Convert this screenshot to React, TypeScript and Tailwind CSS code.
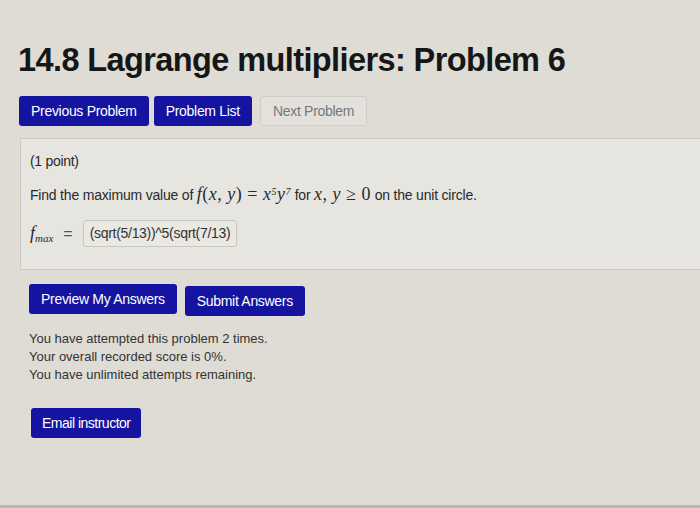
import React from 'react';

const btn =
  'h-[30px] px-3 rounded-[3px] bg-[#1414a0] text-white text-[14px] tracking-[-0.3px] flex items-center';

export default function App() {
  return (
    <div className="w-[700px] h-[508px] overflow-hidden bg-[#dedcd5] font-['Liberation_Sans',Arial,sans-serif] text-[#2a2a2a] flex flex-col">
      <div className="flex-1 pl-[18px]">
        <h1 className="mt-[40px] text-[32.5px] leading-[40px] font-bold text-[#161616] tracking-[-0.6px]">
          14.8 Lagrange multipliers: Problem 6
        </h1>

        <div className="mt-[16px] flex gap-[5px] pl-[1px]">
          <button className={btn}>Previous Problem</button>
          <button className={btn}>Problem List</button>
          <button className="h-[30px] ml-[3px] px-3 rounded-[3px] border border-[#cfcdc6] bg-[#e2e1dc] text-[#777] text-[14px] tracking-[-0.3px] flex items-center">
            Next Problem
          </button>
        </div>

        {/* problem body */}
        <div className="mt-[12px] ml-[2px] h-[132px] border border-r-0 border-[#cbcac4] bg-[#e6e5e0] pl-[9px] pt-[12px]">
          <p className="text-[14px] tracking-[-0.3px]">(1 point)</p>
          <p className="mt-[9px] text-[14px] tracking-[-0.2px] flex items-baseline">
            Find the maximum value of&nbsp;
            <span className="font-['Liberation_Serif',serif] text-[18px] italic tracking-[0.5px]">
              f<span className="not-italic">(</span>x<span className="not-italic">,&nbsp;</span>y<span className="not-italic">)&nbsp;=&nbsp;</span>x
              <sup className="text-[10px]">5</sup>y<sup className="text-[10px]">7</sup>
            </span>
            &nbsp;for&nbsp;
            <span className="font-['Liberation_Serif',serif] text-[18px] italic tracking-[0.5px]">
              x<span className="not-italic">,&nbsp;</span>y<span className="not-italic">&nbsp;≥&nbsp;0</span>
            </span>
            &nbsp;on the unit circle.
          </p>
          <div className="mt-[12px] flex items-center">
            <span className="font-['Liberation_Serif',serif] italic text-[18px]">
              f<sub className="text-[11px]">max</sub>
            </span>
            <span className="ml-[10px] text-[16px] text-[#555]">=</span>
            <div className="ml-[10px] h-[27px] px-[6px] border border-[#c9c8c2] rounded-[3px] bg-[#e9e8e3] flex items-center text-[14px] tracking-[-0.3px] text-[#333]">
              (sqrt(5/13))^5(sqrt(7/13)
            </div>
          </div>
        </div>

        <div className="mt-[14px] pl-[11px] flex gap-[8px] items-start">
          <button className={`${btn} h-[27px] px-[12px]`}>Preview My Answers</button>
          <button className={`${btn} h-[28px] mt-[2px] px-[12px]`}>Submit Answers</button>
        </div>

        <div className="mt-[14px] pl-[11px] text-[13px] leading-[18px] text-[#333]">
          <p>You have attempted this problem 2 times.</p>
          <p>Your overall recorded score is 0%.</p>
          <p>You have unlimited attempts remaining.</p>
        </div>

        <div className="mt-[24px] pl-[13px]">
          <button className={`${btn} h-[28px] px-[11px] tracking-[-0.5px]`}>Email instructor</button>
        </div>
      </div>
      <div className="h-[3px] bg-[#b9b8b4]" />
    </div>
  );
}
